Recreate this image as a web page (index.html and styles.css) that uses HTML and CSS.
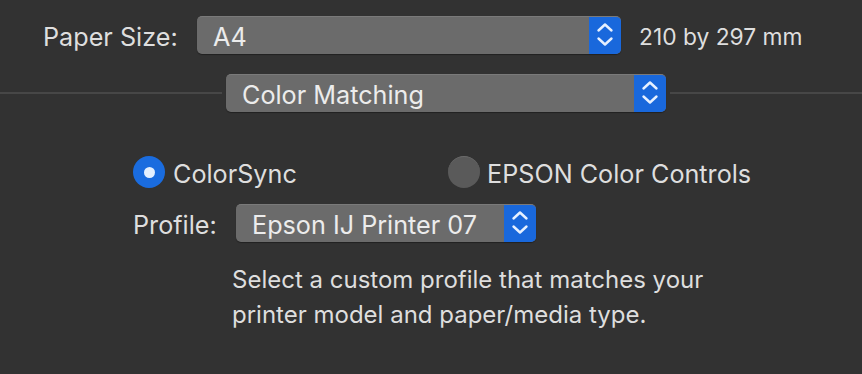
FILE: index.html
```html
<!DOCTYPE html>
<html>
<head>
<meta charset="utf-8">
<link rel="stylesheet" href="styles.css">
</head>
<body>
<div class="panel">
  <div class="row row-paper">
    <span class="label label-paper">Paper Size:</span>
    <div class="popup popup-paper">
      <span class="popup-text">A4</span>
      <span class="stepper"><svg width="32" height="38" viewBox="0 0 32 38"><path d="M9.5 14.5 L16 8.5 L22.5 14.5 M9.5 22.5 L16 28.5 L22.5 22.5" fill="none" stroke="#e6f0ff" stroke-width="2.4" stroke-linecap="round" stroke-linejoin="round"/></svg></span>
    </div>
    <span class="size-text">210 by 297 mm</span>
  </div>
  <div class="row row-sep">
    <div class="sep sep-left"></div>
    <div class="popup popup-matching">
      <span class="popup-text">Color Matching</span>
      <span class="stepper"><svg width="32" height="38" viewBox="0 0 32 38"><path d="M9.5 14.5 L16 8.5 L22.5 14.5 M9.5 22.5 L16 28.5 L22.5 22.5" fill="none" stroke="#e6f0ff" stroke-width="2.4" stroke-linecap="round" stroke-linejoin="round"/></svg></span>
    </div>
    <div class="sep sep-right"></div>
  </div>
  <div class="row row-radios">
    <div class="radio-item radio-first">
      <span class="radio radio-on"><span class="dot"></span></span>
      <span class="radio-label">ColorSync</span>
    </div>
    <div class="radio-item radio-second">
      <span class="radio radio-off"></span>
      <span class="radio-label">EPSON Color Controls</span>
    </div>
  </div>
  <div class="row row-profile">
    <span class="label label-profile">Profile:</span>
    <div class="popup popup-profile">
      <span class="popup-text">Epson IJ Printer 07</span>
      <span class="stepper"><svg width="32" height="38" viewBox="0 0 32 38"><path d="M9.5 14.5 L16 8.5 L22.5 14.5 M9.5 22.5 L16 28.5 L22.5 22.5" fill="none" stroke="#e6f0ff" stroke-width="2.4" stroke-linecap="round" stroke-linejoin="round"/></svg></span>
    </div>
  </div>
  <p class="desc">Select a custom profile that matches your<br>printer model and paper/media type.</p>
</div>
</body>
</html>
```
FILE: styles.css
```css
html, body {
  margin: 0;
  padding: 0;
  background: #323232;
}
body {
  width: 862px;
  height: 374px;
  overflow: hidden;
  font-family: Inter, "Liberation Sans", sans-serif;
  font-size: 25.2px;
  color: #dedede;
}
.panel {
  display: flex;
  flex-direction: column;
  padding-top: 16px;
}
.row {
  display: flex;
  align-items: center;
}
.row-paper {
  padding-left: 43px;
  height: 38px;
}
.label {
  color: #dedede;
  padding-top: 3px;
}
.label-paper {
  width: 154px;
}
.label-profile {
  width: 103px;
}
.popup {
  display: flex;
  align-items: center;
  height: 38px;
  box-sizing: border-box;
  background: #6b6b6b;
  border-top: 1px solid #7a7a7a;
  border-radius: 5px;
  overflow: hidden;
  box-shadow: 0 1px 1px rgba(0,0,0,0.35);
}
.popup-text {
  flex: 1;
  padding-left: 16px;
  padding-top: 2px;
  color: #ececec;
  white-space: nowrap;
}
.stepper {
  width: 32px;
  height: 38px;
  margin-top: -1px;
  background: #1968dc;
  display: flex;
}
.popup-paper {
  width: 424px;
}
.size-text {
  margin-left: 18px;
  padding-top: 3px;
  font-size: 22.8px;
  color: #dedede;
}
.row-sep {
  margin-top: 20px;
  height: 38px;
}
.sep {
  height: 2px;
  background: #474747;
}
.sep-left {
  width: 222px;
}
.sep-right {
  flex: 1;
}
.popup-matching {
  margin: 0 4px;
  width: 440px;
}
.row-radios {
  margin-top: 44px;
  height: 32px;
}
.radio-item {
  display: flex;
  align-items: center;
}
.radio-first {
  margin-left: 133px;
  width: 315px;
}
.radio {
  width: 32px;
  height: 32px;
  border-radius: 50%;
  box-sizing: border-box;
  display: flex;
  align-items: center;
  justify-content: center;
}
.radio-on {
  background: #1a6cdf;
}
.dot {
  width: 11px;
  height: 11px;
  border-radius: 50%;
  background: #e4f0ff;
}
.radio-off {
  background: #5a5a5a;
  border-top: 1px solid #6c6c6c;
}
.radio-label {
  margin-left: 8px;
  padding-top: 3px;
}
.radio-second .radio-label {
  margin-left: 7px;
}
.row-profile {
  margin-top: 16px;
  padding-left: 133px;
  height: 38px;
}
.popup-profile {
  width: 300px;
}
.desc {
  margin: 20px 0 0 232px;
  font-size: 24px;
  line-height: 35px;
  color: #dedede;
}
```
